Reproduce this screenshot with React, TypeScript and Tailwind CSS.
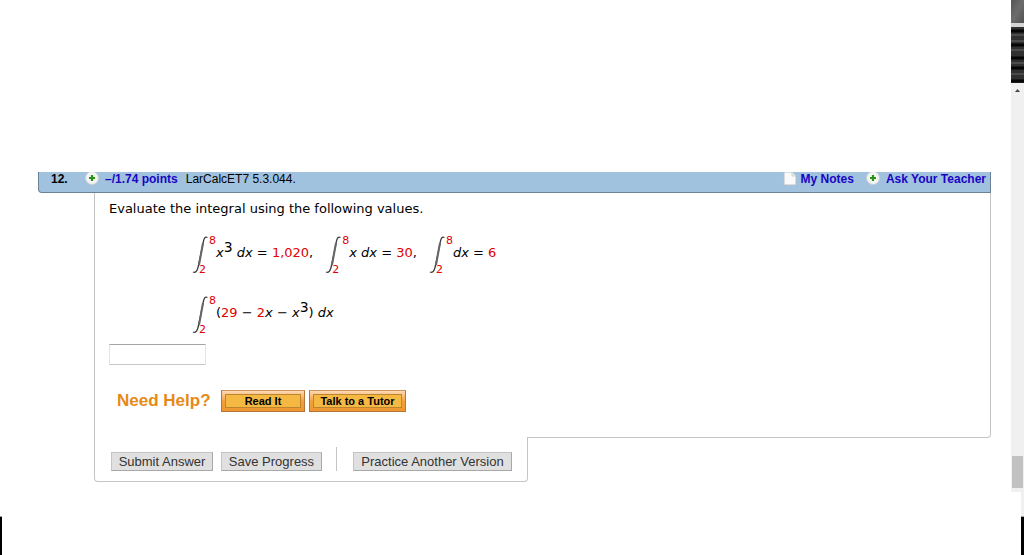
import type { ReactNode } from "react";

export default function App() {
  return (
    <div className="flex min-h-screen bg-white">
      <div className="flex w-[2px] shrink-0 flex-col justify-end">
        <div className="h-[39px] border-t border-neutral-400 bg-black" />
      </div>
      <main className="min-w-0 flex-1 pl-9 pr-5 pt-[172px]">
        <QuestionHeader />
        <div className="ml-14">
          <section className="rounded-br border-b border-l border-r border-[#c4c4c4] pb-6 pl-[14px] pt-2 font-['Verdana','DejaVu_Sans',sans-serif] text-[13px] text-black">
            <p className="leading-4">Evaluate the integral using the following values.</p>
            <div className="ml-[83px] mt-4 flex items-start">
              <Integral>
                <i>x</i><Cube />&nbsp;<i>dx</i> = <Red>1,020</Red>,
              </Integral>
              <Integral className="ml-3">
                <i>x</i> <i>dx</i> = <Red>30</Red>,
              </Integral>
              <Integral className="ml-3">
                <i>dx</i> = <Red>6</Red>
              </Integral>
            </div>
            <div className="ml-[83px] mt-5 flex items-start">
              <Integral>
                (<Red>29</Red> − <Red>2</Red><i>x</i> − <i>x</i><Cube />) <i>dx</i>
              </Integral>
            </div>
            <input
              type="text"
              aria-label="Answer"
              className="mt-[11px] block h-[21px] w-[97px] border border-[#e4e4e4] border-b-[#c8c8c8] border-t-[#a5a5a5] px-1 outline-none"
            />
            <div className="mt-6 flex items-center font-['Liberation_Sans',sans-serif]">
              <span className="ml-2 w-[104px] text-[17px] font-bold leading-6 text-[#e58a17]">Need Help?</span>
              <HelpButton className="w-[84px]">Read It</HelpButton>
              <HelpButton className="ml-1 w-[97px]">Talk to a Tutor</HelpButton>
            </div>
          </section>
          <footer className="-mt-px flex h-[45px] w-[434px] items-start rounded-b border-b border-l border-r border-[#c4c4c4] bg-white pl-4 pt-[10px]">
            <ActionButton className="mt-[5px] w-[102px]">Submit Answer</ActionButton>
            <ActionButton className="ml-2 mt-[5px] w-[101px]">Save Progress</ActionButton>
            <div className="ml-[14px] h-6 w-px bg-[#c4c4c4]" />
            <ActionButton className="ml-4 mt-[5px] w-[159px]">Practice Another Version</ActionButton>
          </footer>
        </div>
      </main>
      <WindowEdge />
    </div>
  );
}

function QuestionHeader() {
  return (
    <header className="flex h-[21px] items-start overflow-hidden rounded-bl border-b border-l border-r border-[#6b8196] bg-[#a1c2df] pr-1 font-['Liberation_Sans',sans-serif] text-[12px] leading-[14px] text-black">
      <span className="ml-3 w-[34px] font-bold">12.</span>
      <PlusIcon />
      <a href="#points" className="ml-[6px] font-bold text-[#1a05c4]">–/1.74 points</a>
      <span className="ml-2">LarCalcET7 5.3.044.</span>
      <span className="flex-1" />
      <NoteIcon />
      <a href="#notes" className="ml-1 font-bold text-[#1a05c4]">My Notes</a>
      <span className="w-3" />
      <PlusIcon />
      <a href="#teacher" className="ml-[6px] font-bold text-[#1a05c4]">Ask Your Teacher</a>
    </header>
  );
}

function Integral({ children, className = "" }: { children: ReactNode; className?: string }) {
  return (
    <span className={`flex items-start ${className}`}>
      <span className="relative h-10 w-6 shrink-0">
        <svg width="17" height="40" viewBox="0 0 17 40" fill="none" aria-hidden="true">
          <path d="M15.5 4.5C13 3.3 12 5 11.3 9L6.8 31C5.8 36.5 4.5 40.5 1 39" stroke="#3b3b3b" strokeWidth="1.3" />
          <path d="M11 10L7 32" stroke="#666" strokeWidth="2" />
        </svg>
        <span className="absolute left-[17px] top-px text-[11px] leading-[14px] text-[#e00000]">8</span>
        <span className="absolute -bottom-[3px] left-[7px] text-[11px] leading-3 text-[#e00000]">2</span>
      </span>
      <span className="mt-3 whitespace-nowrap leading-4">{children}</span>
    </span>
  );
}

function Red({ children }: { children: ReactNode }) {
  return <span className="text-[#e00000]">{children}</span>;
}

function Cube() {
  return <sup className="top-[-5px] text-[14px] leading-none">3</sup>;
}

function HelpButton({ children, className = "" }: { children: ReactNode; className?: string }) {
  return (
    <button type="button" className={`h-[22px] border border-[#b5763a] border-t-[#cf9464] bg-linear-to-b from-[#fbd9b4] via-[#f3a03a] to-[#ee9630] p-[3px] ${className}`}>
      <span className="block h-full whitespace-nowrap border border-[#bc8630] bg-[#f5b943] text-[11px] font-bold leading-3 text-black">{children}</span>
    </button>
  );
}

function ActionButton({ children, className = "" }: { children: ReactNode; className?: string }) {
  return (
    <button type="button" className={`h-[19px] whitespace-nowrap border border-[#a8a8a8] border-l-[#c4c4c4] border-t-[#c4c4c4] bg-[#e0e0e0] font-['Liberation_Sans',sans-serif] text-[13px] leading-4 text-[#333] ${className}`}>
      {children}
    </button>
  );
}

function PlusIcon() {
  return (
    <svg className="-mt-px shrink-0" width="14" height="14" viewBox="0 0 14 14" aria-hidden="true">
      <circle cx="7" cy="7" r="6.5" fill="#f4f4f2" stroke="#c5ced6" />
      <path d="M7 4V10M4 7H10" stroke="#2a9414" strokeWidth="2.2" />
    </svg>
  );
}

function NoteIcon() {
  return (
    <svg className="shrink-0" width="14" height="14" viewBox="0 0 14 14" aria-hidden="true">
      <path d="M1 0H9L13 4V13H1Z" fill="#fafafa" stroke="#b5bec6" />
      <path d="M9 0V4H13" fill="#e9e9e9" stroke="#d1d1d1" />
    </svg>
  );
}

function WindowEdge() {
  return (
    <aside className="flex w-[13px] shrink-0 flex-col">
      <div className="h-[23px] bg-linear-to-br from-[#555] via-[#6c6c6c] to-[#505050]" />
      <div className="h-1 bg-[#d5d5d5]" />
      <svg className="h-[56px] w-full" viewBox="0 0 13 56" preserveAspectRatio="none" aria-hidden="true">
        <path d="M0 0H13V56H0Z" fill="#303030" />
        <path d="M0 4H13M0 18H13M0 31H13M0 41H13M0 54H13" stroke="#050505" strokeWidth="3" />
        <path d="M0 8H13M0 14H13M0 23H13M0 36H13M0 47H13" stroke="#4c4c4c" strokeWidth="2" />
      </svg>
      <div className="flex flex-1 flex-col bg-[#f0f0f0]">
        <svg className="mx-auto mt-[5px]" width="7" height="4" viewBox="0 0 7 4" aria-hidden="true">
          <path d="M1 4L3.5 1L6 4Z" fill="#444" />
        </svg>
        <span className="flex-1" />
        <div className="mx-px mb-1 h-8 bg-[#c1c1c1]" />
      </div>
      <div className="h-6 border-r-3 border-[#f0f0f0]" />
      <div className="flex h-[39px] justify-end">
        <div className="w-[3px] border-t border-neutral-400 bg-black" />
      </div>
    </aside>
  );
}
